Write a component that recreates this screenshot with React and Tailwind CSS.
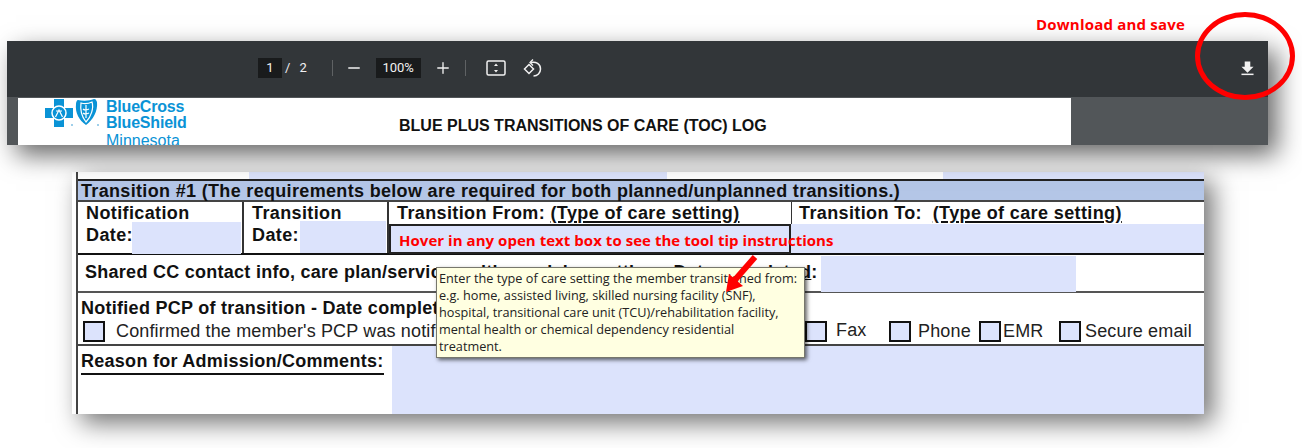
import React from 'react';
import { Minus, Plus } from 'lucide-react';

const arial = 'font-["Liberation_Sans",Arial,sans-serif]';
const fieldBlue = 'bg-[#dce3fc]';

function Checkbox() {
  return <div className={`h-[21px] w-[22px] shrink-0 border-[2px] border-[#111] ${fieldBlue}`} />;
}

function BlueLogo() {
  return (
    <div className="flex items-start">
      <svg width="62" height="36" viewBox="0 0 62 36" className="mt-[1px] shrink-0">
        <path d="M9 0h10v9h9v10h-9v9H9v-9H0V9h9z" fill="#0a93d6" />
        <circle cx="14" cy="14" r="7" fill="none" stroke="#fff" strokeWidth="1.5" />
        <path d="M10.5 18l3.5-7 3.5 7M11 12h6" fill="none" stroke="#fff" strokeWidth="1.2" />
        <circle cx="27" cy="26" r="1" fill="#7fbfe3" />
        <path d="M33 1c5 1 11 1 16 -1c2 0 2 1 3 3c1 9 -4 18 -11 23c-7 -5 -11 -12 -10 -21c0 -2 1 -4 2 -4z" fill="#0a93d6" />
        <path d="M36 4c3 1 7 1 11 -1c2 6 -1 15 -6 20c-4 -5 -6 -12 -5 -19z" fill="none" stroke="#fff" strokeWidth="1.2" />
        <path d="M41 6v13M38 10c2 2 4 1 6 0M38 14c2 2 4 1 6 0" fill="none" stroke="#fff" strokeWidth="1.2" />
        <circle cx="53" cy="26" r="1" fill="#7fbfe3" />
      </svg>
      <div className={`${arial} ml-[-1px] pt-[1px] text-[#0a93d6]`}>
        <div className="text-[16px] leading-[16px] font-bold tracking-[-0.2px]">BlueCross</div>
        <div className="text-[16px] leading-[16px] font-bold tracking-[-0.2px]">BlueShield</div>
        <div className="mt-[2px] text-[16px] leading-[16px]">Minnesota</div>
      </div>
    </div>
  );
}

function Toolbar() {
  return (
    <div className='flex h-[56px] items-center bg-[#323639] pb-[2px] pl-[251px] font-["Roboto",sans-serif] text-[13px] text-[#f1f1f1]'>
      <div className="flex h-[20px] w-[24px] items-center justify-center bg-[#191b1c]">1</div>
      <span className="ml-[3px]">/</span>
      <span className="ml-[9px]">2</span>
      <div className="ml-[25px] h-[16px] w-px bg-[#5f6264]" />
      <Minus size={18} strokeWidth={1.8} className="ml-[12px]" />
      <div className="ml-[13px] flex h-[20px] w-[45px] items-center justify-center bg-[#191b1c]">100%</div>
      <Plus size={18} strokeWidth={1.8} className="ml-[13px]" />
      <div className="ml-[13px] h-[16px] w-px bg-[#5f6264]" />
      <svg width="20" height="16" viewBox="0 0 20 16" className="ml-[20px]" fill="none">
        <rect x="1" y="1" width="18" height="14" rx="1.5" stroke="#f1f1f1" strokeWidth="1.5" />
        <path d="M10 3.5l2 2.5H8zM10 12.5l2-2.5H8z" fill="#f1f1f1" />
      </svg>
      <svg width="19" height="18" viewBox="0 0 19 18" className="ml-[17px]" fill="none">
        <path d="M6 5.500l4.500 4.500L6 14.500 1.500 10z" stroke="#f1f1f1" strokeWidth="1.5" />
        <path d="M8 3.500c5-1.200 9.500 1.500 9.500 6.500 0 4-3 7-7 7" stroke="#f1f1f1" strokeWidth="1.5" />
        <path d="M10 0.500l-3 3 3 3" stroke="#f1f1f1" strokeWidth="1.3" />
      </svg>
      <svg width="13" height="15" viewBox="0 0 14 15" className="ml-auto mr-[14px]" fill="#f1f1f1">
        <path d="M4 0h6v5.500h3.500L7 12 .5 5.500H4z" />
        <rect x="0.5" y="13" width="13" height="1.600" />
      </svg>
    </div>
  );
}

function ViewerPanel() {
  return (
    <div className="relative z-10 ml-[7px] h-[104px] w-[1261px] shadow-[9px_10px_24px_rgba(0,0,0,0.6)]">
      <Toolbar />
      <div className="flex h-[48px] bg-[#525659] pl-[11px]">
        <div className="mt-[1px] h-[47px] w-[1053px] overflow-hidden bg-white">
          <div className="flex">
            <div className="ml-[27px] w-[354px] shrink-0">
              <BlueLogo />
            </div>
            <div className={`${arial} mt-[19px] text-[16px] leading-[18px] font-bold text-[#111]`}>
              BLUE PLUS TRANSITIONS OF CARE (TOC) LOG
            </div>
          </div>
        </div>
      </div>
    </div>
  );
}

function FormPanel() {
  return (
    <div className={`${arial} ml-[72px] mt-[27px] h-[242px] w-[1132px] bg-white pl-[4px] text-[#111] shadow-[9px_9px_24px_rgba(0,0,0,0.55)]`}>
      <div className="flex h-full flex-col border-l-[2px] border-[#444]">
        <div className="flex h-[7px]">
          <div className="w-[171px]" />
          <div className={`w-[418px] ${fieldBlue}`} />
          <div className="w-[276px]" />
          <div className={`flex-1 ${fieldBlue}`} />
        </div>
        <div className="h-[23px] border-y-[2px] border-t-[#222] border-b-[#444] bg-[#b4c6e7] pl-[3px] text-[18px] leading-[21px] font-bold tracking-[0.33px]">
          Transition #1 (The requirements below are required for both planned/unplanned transitions.)
        </div>
        <div className="flex h-[53px] border-b-[2px] border-[#111] text-[18px] font-bold tracking-[0.38px]">
          <div className="flex w-[166px] flex-col border-r-[2px] border-[#333] pl-[8px]">
            <div className="h-[20px] leading-[23px]">Notification</div>
            <div className="flex flex-1">
              <span className="w-[46px] pt-[2px] leading-[22px]">Date:</span>
              <div className={`mb-[-1px] mr-[1px] flex-1 ${fieldBlue}`} />
            </div>
          </div>
          <div className="flex w-[145px] flex-col border-r-[2px] border-[#333] pl-[8px]">
            <div className="h-[19px] leading-[23px]">Transition</div>
            <div className="flex flex-1">
              <span className="w-[48px] pt-[3px] leading-[22px]">Date:</span>
              <div className={`mr-[1px] flex-1 ${fieldBlue}`} />
            </div>
          </div>
          <div className="relative z-[1] flex w-[402px] flex-col">
            <div className="h-[22px] pl-[8px] leading-[23px] whitespace-nowrap">
              Transition From: <span className="underline decoration-[2px] underline-offset-[2px]">(Type of care setting)</span>
            </div>
            <div className={`flex flex-1 items-center border-[2px] border-[#222] pl-[8px] pt-[3px] font-["Open_Sans",sans-serif] text-[15px] tracking-[0.04px] whitespace-nowrap text-[#ff0000] ${fieldBlue}`}>
              Hover in any open text box to see the tool tip instructions
            </div>
          </div>
          <div className="flex flex-1 flex-col">
            <div className="h-[22px] border-l border-[#333] pl-[7px] leading-[23px] whitespace-nowrap">
              Transition To:&nbsp; <span className="underline decoration-[2px] underline-offset-[2px]">(Type of care setting)</span>
            </div>
            <div className={`flex-1 ${fieldBlue}`} />
          </div>
        </div>
        <div className="flex h-[38px] border-b-[2px] border-[#555] text-[18px] font-bold tracking-[0.27px]">
          <div className="w-[743px] overflow-hidden pl-[7px] leading-[34px] whitespace-nowrap">
            Shared CC contact info, care plan/services with receiving setting - <span className="underline">Date completed</span>:
          </div>
          <div className={`mb-[-1px] mt-[1px] w-[255px] ${fieldBlue}`} />
        </div>
        <div className="flex h-[53px] flex-col border-b-[2px] border-[#444]">
          <div className="h-[28px] pl-[3px] text-[18px] leading-[30px] font-bold tracking-[0.27px] whitespace-nowrap">
            Notified PCP of transition - Date completed:
          </div>
          <div className="flex items-center text-[18px] leading-[21px] tracking-[0.15px] text-[#222]">
            <div className="w-[727px]">
              <div className="flex items-center pl-[5px]">
                <Checkbox />
                <span className="ml-[11px] whitespace-nowrap">Confirmed the member's PCP was notified via:</span>
              </div>
            </div>
            <Checkbox />
            <span className="ml-[9px] mt-[-2px] w-[53px]">Fax</span>
            <Checkbox />
            <span className="ml-[7px] w-[61px]">Phone</span>
            <Checkbox />
            <span className="ml-[2px] w-[56px]">EMR</span>
            <Checkbox />
            <span className="ml-[4px] whitespace-nowrap">Secure email</span>
          </div>
        </div>
        <div className="flex flex-1">
          <div className="w-[314px] pl-[3px]">
            <div className="w-[303px] whitespace-nowrap border-b-[2px] border-[#111] pb-[1px] pt-[5px] text-[18px] leading-[21px] font-bold tracking-[0.27px]">
              Reason for Admission/Comments:
            </div>
          </div>
          <div className={`flex-1 ${fieldBlue}`} />
        </div>
      </div>
    </div>
  );
}

export default function App() {
  return (
    <div className="relative h-[448px] w-[1302px] overflow-hidden bg-white pt-[41px]">
      <ViewerPanel />
      <FormPanel />

      <div className='absolute left-[1036px] top-[14px] z-20 font-["Open_Sans",sans-serif] text-[15px] leading-[20px] font-bold tracking-[0.2px] text-[#ff0000]'>
        Download and save
      </div>
      <div className="absolute left-[1195px] top-[12px] z-20 h-[88px] w-[100px] rounded-[50%] border-[5px] border-[#ff0000]" />

      <div className='absolute left-[436px] top-[267px] z-20 h-[91px] w-[369px] border border-[#77776c] bg-[#ffffe1] pb-[2px] pl-[2px] pt-[2px] font-["Open_Sans",sans-serif] text-[12.7px] leading-[17px] text-[#222] shadow-[2px_2px_4px_rgba(0,0,0,0.6)]'>
        Enter the type of care setting the member transitioned from:<br />
        e.g. home, assisted living, skilled nursing facility (SNF),<br />
        hospital, transitional care unit (TCU)/rehabilitation facility,<br />
        mental health or chemical dependency residential<br />
        treatment.
      </div>
      <svg width="40" height="44" viewBox="0 0 40 44" className="absolute left-[722px] top-[254px] z-30">
        <path d="M33 3L12 27" stroke="#ff0000" strokeWidth="6" />
        <path d="M4 38L7 20L21 32z" fill="#ff0000" />
      </svg>
    </div>
  );
}
